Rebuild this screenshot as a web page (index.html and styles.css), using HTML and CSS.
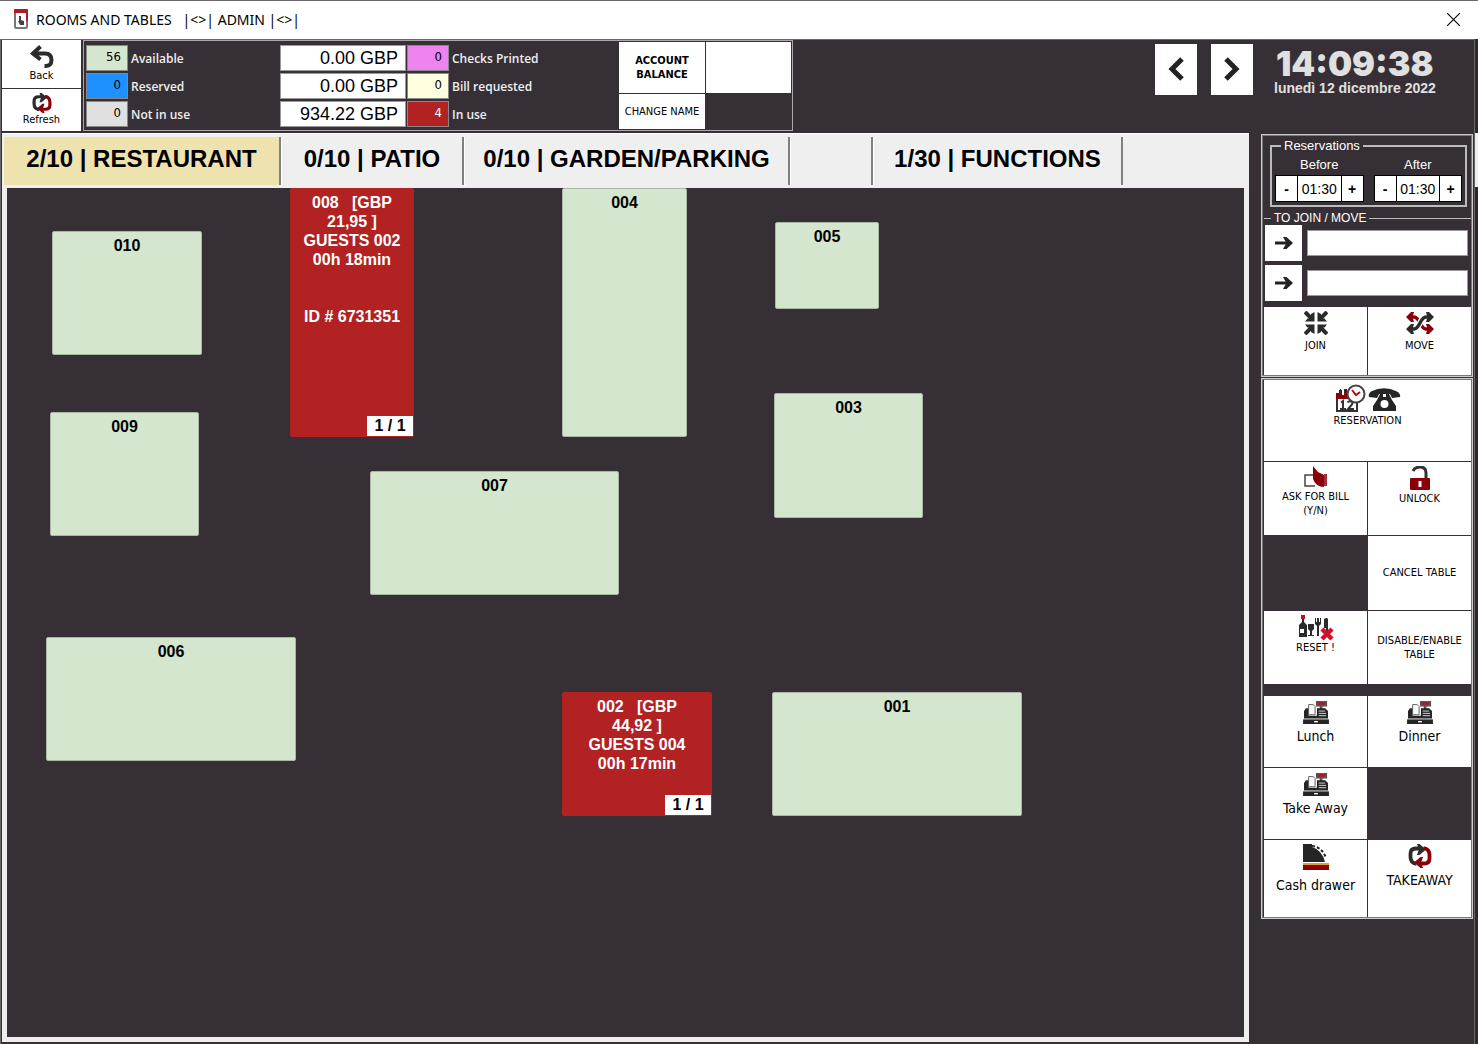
FILE: index.html
```
<!DOCTYPE html>
<html lang="en">
<head>
  <meta charset="utf-8">
  <title>ROOMS AND TABLES</title>
  <meta name="viewport" content="width=device-width, initial-scale=1">
  <link rel="stylesheet" href="styles.css">
</head>
<body>

  <!-- shared icons -->
  <svg class="defs" width="0" height="0">
    <symbol id="i-refresh" viewBox="0 0 24 24">
      <path d="M8.500 20Q2.500 19 2.500 13V9.500Q2.500 4.500 8 4.500H12" fill="none" stroke="#2b2b2b" stroke-width="3.800"/>
      <path d="M9 0h2.500l6.500 5.500-6.500 5.500H9l2-5.500z" fill="#2b2b2b"/>
      <path d="M15.500 4Q21.500 5 21.500 11v3.500Q21.500 19.500 16 19.500h-4" fill="none" stroke="#8b0008" stroke-width="3.800"/>
      <path d="M15 24h-2.500L6 18.500l6.500-5.500H15l-2 5.500z" fill="#8b0008"/>
    </symbol>
    <symbol id="i-arrow" viewBox="0 0 18 14">
      <path d="M0 7h14" fill="none" stroke="#222" stroke-width="3"/>
      <path d="M8 1h3.500L18 7l-6.500 6H8l3.500-6z" fill="#222"/>
    </symbol>
    <symbol id="i-register" viewBox="0 0 28 26">
      <path d="M14 1h12v6h-5v3h-3V7h-4z" fill="#555"/>
      <path d="M16 2.500h8v2.500h-8z" fill="#b5122a"/>
      <path d="M3 9h3v8h9V9h9l3 3v8H1v-8z" fill="#252525"/>
      <path d="M6 5h5l2 2v9H6z" fill="#fff" stroke="#555"/>
      <path d="M17 12h7M17 14.500h8M17 17h8" stroke="#ddd"/>
      <path d="M0 21h28v5H0z" fill="#252525"/>
      <path d="M12 23.500h4" stroke="#fff" stroke-width="1.500"/>
    </symbol>
  </svg>

  <header class="titlebar">
    <svg class="app-icon" viewBox="0 0 14 20">
      <rect x="1" y="1" width="12" height="18" rx="1" fill="#fff" stroke="#777" stroke-width="2"/>
      <path d="M0 4V1q0-1 1-1h12q1 0 1 1v11h-2V4z" fill="#b01a22"/>
      <path d="M5 7h2v4l3 1v4H6l-2-4h1z" fill="#444"/>
    </svg>
    <h1>ROOMS AND TABLES &nbsp; |&lt;&gt;| ADMIN |&lt;&gt;|</h1>
    <button class="close" aria-label="Close">
      <svg viewBox="0 0 12 12"><path d="M0 0l12 12M12 0L0 12" stroke="#000" fill="none"/></svg>
    </button>
  </header>

  <div class="window">
    <div class="toolbar">
      <div class="side-actions">
        <button>
          <svg class="icon-24" viewBox="0 0 24 24"><path d="M10.500 1.500L3 8.500l7.500 6M3 8.500h12q6.500 0 6.500 6.500t-7 6" fill="none" stroke="#2b2b2b" stroke-width="4"/></svg>
          Back
        </button>
        <button>
          <svg class="icon-20"><use href="#i-refresh"/></svg>
          Refresh
        </button>
      </div>

      <div class="status">
        <div class="counters">
          <span class="count available">56</span><span class="label">Available</span>
          <input class="money" value="0.00 GBP" aria-label="Checks printed total" readonly>
          <span class="count printed">0</span><span class="label">Checks Printed</span>

          <span class="count reserved">0</span><span class="label">Reserved</span>
          <input class="money" value="0.00 GBP" aria-label="Bill requested total" readonly>
          <span class="count requested">0</span><span class="label">Bill requested</span>

          <span class="count unused">0</span><span class="label">Not in use</span>
          <input class="money" value="934.22 GBP" aria-label="In use total" readonly>
          <span class="count inuse">4</span><span class="label">In use</span>
        </div>
        <div class="account">
          <button class="bold">ACCOUNT<br>BALANCE</button>
          <button aria-label="Balance"></button>
          <button>CHANGE NAME</button>
        </div>
      </div>

      <div class="pager">
        <button aria-label="Previous"><svg viewBox="0 0 16 24"><path d="M14 2L4 12l10 10" fill="none" stroke="#222" stroke-width="5"/></svg></button>
        <button aria-label="Next"><svg viewBox="0 0 16 24"><path d="M2 2l10 10L2 22" fill="none" stroke="#222" stroke-width="5"/></svg></button>
      </div>

      <div class="clock">
        <div class="time">14:09:38</div>
        <div class="date">lunedì 12 dicembre 2022</div>
      </div>
    </div>

    <div class="content">
      <main class="rooms">
        <nav class="tabs">
          <button class="tab tab-restaurant active">2/10 | RESTAURANT</button>
          <button class="tab tab-patio">0/10 | PATIO</button>
          <button class="tab tab-garden">0/10 | GARDEN/PARKING</button>
          <button class="tab tab-empty" aria-label="Empty room"></button>
          <button class="tab tab-functions">1/30 | FUNCTIONS</button>
        </nav>

        <div class="floor">
          <button class="table t010">010</button>
          <button class="table t009">009</button>
          <button class="table t006">006</button>
          <button class="table t008 busy">
            <span>008 &nbsp; [GBP<br>21,95 ]<br>GUESTS 002<br>00h 18min<br><br><br>ID # 6731351</span>
            <span class="badge">1 / 1</span>
          </button>
          <button class="table t007">007</button>
          <button class="table t004">004</button>
          <button class="table t002 busy">
            <span>002 &nbsp; [GBP<br>44,92 ]<br>GUESTS 004<br>00h 17min</span>
            <span class="badge">1 / 1</span>
          </button>
          <button class="table t005">005</button>
          <button class="table t003">003</button>
          <button class="table t001">001</button>
        </div>
      </main>

      <aside class="sidebar">
        <section class="box">
          <fieldset class="reservations">
            <legend>Reservations</legend>
            <div class="spin">
              <label for="before">Before</label>
              <div class="spin-row"><button>-</button><input id="before" value="01:30"><button>+</button></div>
            </div>
            <div class="spin">
              <label for="after">After</label>
              <div class="spin-row"><button>-</button><input id="after" value="01:30"><button>+</button></div>
            </div>
          </fieldset>

          <fieldset class="join">
            <legend>TO JOIN / MOVE</legend>
            <div class="join-row">
              <button aria-label="Set first table"><svg><use href="#i-arrow"/></svg></button>
              <input aria-label="First table">
            </div>
            <div class="join-row">
              <button aria-label="Set second table"><svg><use href="#i-arrow"/></svg></button>
              <input aria-label="Second table">
            </div>
          </fieldset>

          <div class="grid join-actions">
            <button>
              <svg class="icon-24" viewBox="0 0 24 24">
                <path d="M1 1l7 7M23 1l-7 7M1 23l7-7M23 23l-7-7" stroke="#2b2b2b" stroke-width="4"/>
                <path d="M10.500 1v9.500H1l2.500-3H7V3zM13.500 1v9.500H23l-2.500-3H17V3zM10.500 23v-9.500H1l2.500 3H7V21zM13.500 23v-9.500H23l-2.500 3H17V21z" fill="#2b2b2b"/>
              </svg>
              JOIN
            </button>
            <button>
              <svg class="icon-28" viewBox="0 0 28 24">
                <path d="M4 6h4q3 0 6 6t6 6h4" fill="none" stroke="#8b0008" stroke-width="3.400"/>
                <path d="M5 1h3L6.500 6 8 11H5L0 6zM23 13h-3l1.500 5-1.500 5h3l5-5z" fill="#8b0008"/>
                <path d="M10 17q2-1 4-5t4-5" fill="none" stroke="#fff" stroke-width="6"/>
                <path d="M4 18h4q3 0 6-6t6-6h4" fill="none" stroke="#2b2b2b" stroke-width="3.400"/>
                <path d="M5 13h3l-1.500 5L8 23H5l-5-5zM23 1h-3l1.500 5-1.500 5h3l5-5z" fill="#2b2b2b"/>
              </svg>
              MOVE
            </button>
          </div>
        </section>

        <section class="box">
          <div class="grid actions">
            <button class="wide">
              <svg class="icon-res" viewBox="0 0 66 30">
                <path d="M2 15v12h20V15" fill="#fff" stroke="#333" stroke-width="2"/>
                <path d="M1 9h3V6h3v5h2V5h3v8h4l2 2H1z" fill="#8b0008"/>
                <path d="M5 5h1v5H5zM9 5h1v5H9z" fill="#333"/>
                <path d="M6 18.500l2-1.500v8M5 25h6M12.500 18.500q1.500-2 4-1 2 1 0 3.500L13 25h6" fill="none" stroke="#333" stroke-width="2"/>
                <circle cx="21" cy="10" r="8.500" fill="#fff" stroke="#444" stroke-width="2"/>
                <path d="M17 6l4 5 4-3" fill="none" stroke="#b01010" stroke-width="2"/>
                <path d="M34 13q-1-3 2-5.500Q49 1 62 7.500q4 2.500 3 5.500l-8 1-2-4H44l-2 4z" fill="#252525"/>
                <path d="M45 10h3v3h3v-3h3l3 6 4 6v5H38v-5l4-6z" fill="#252525"/>
                <circle cx="49.500" cy="20" r="4" fill="#fff"/>
              </svg>
              RESERVATION
            </button>
            <button>
              <svg class="icon-24" viewBox="0 0 24 24">
                <path d="M10 9H1v11h10" fill="none" stroke="#444" stroke-width="1.500"/>
                <path d="M9 0l5 6 6 3v12q-8 0-11-8z" fill="#8b0008"/>
                <path d="M20 8h3v12h-3z" fill="#a03038"/>
              </svg>
              ASK FOR BILL<br>(Y/N)
            </button>
            <button class="unlock">
              <svg class="icon-24" viewBox="0 0 24 24">
                <path d="M5 5q2-4 7-4 6 0 6 6v5" fill="none" stroke="#333" stroke-width="3"/>
                <rect x="2" y="12" width="20" height="12" rx="1" fill="#8b0008"/>
                <path d="M12 15v6" stroke="#fff" stroke-width="3"/>
              </svg>
              UNLOCK
            </button>
            <span></span>
            <button class="middle">CANCEL TABLE</button>
            <button>
              <svg class="icon-reset" viewBox="0 0 36 26">
                <path d="M3 0h4v4H3z" fill="#b5122a"/>
                <path d="M4 4h2v3l3 3v12H1V10l3-3z" fill="#2b2b2b"/>
                <path d="M2 14h4v4H2z" fill="#fff"/>
                <path d="M10 9h6v5l-2 2v4h2v1h-6v-1h2v-4l-2-2zM17 3h1v4h1V3h2v4h1V3h1v6l-2 2v10h-2V11l-2-2zM26 4q3-2 4 0v17h-2v-8h-2z" fill="#2b2b2b"/>
                <path d="M24 14l10 10M34 14L24 24" stroke="#d0102c" stroke-width="4.500"/>
              </svg>
              RESET !
            </button>
            <button class="middle">DISABLE/ENABLE<br>TABLE</button>
          </div>

          <div class="grid services">
            <button><svg class="icon-28"><use href="#i-register"/></svg>Lunch</button>
            <button><svg class="icon-28"><use href="#i-register"/></svg>Dinner</button>
            <button><svg class="icon-28"><use href="#i-register"/></svg>Take Away</button>
            <span></span>
            <button>
              <svg class="icon-drawer" viewBox="0 0 26 26">
                <path d="M0 0h9v3q10 3 13 15H0z" fill="#252525"/>
                <path d="M9 2q10 1 14 12" fill="none" stroke="#252525" stroke-width="2" stroke-dasharray="3 2"/>
                <path d="M0 19h26v2H0z" fill="#e0a020"/>
                <path d="M0 21h26v5H0z" fill="#8b0008"/>
              </svg>
              Cash drawer
            </button>
            <button><svg class="icon-24"><use href="#i-refresh"/></svg>TAKEAWAY</button>
          </div>
        </section>
      </aside>
    </div>
  </div>

</body>
</html>
```
FILE: styles.css
```
* {
  box-sizing: border-box;
}

body {
  margin: 0;
  min-height: 100vh;
  display: flex;
  flex-direction: column;
  /* strip of the window behind, seen on the right edge */
  background: linear-gradient(#2c282c 133px, #efefef 133px, #efefef 187px, #2c282c 187px);
  font-family: "DejaVu Sans Condensed", "DejaVu Sans", sans-serif;
  font-size: 11px;
  color: #000;
}

button {
  margin: 0;
  padding: 0;
  border: none;
  border-radius: 0;
  background-color: #fff;
  color: #000;
  font: inherit;
  line-height: 14px;
  cursor: pointer;
}

input {
  min-width: 0;
  border: 1px solid #999;
  border-radius: 0;
  padding: 0;
  background-color: #fff;
}

svg {
  display: block;
}

.defs {
  position: absolute;
}

/* title bar */
.titlebar {
  display: flex;
  align-items: center;
  height: 39px;
  padding: 0 18px 2px 14px;
  background-color: #fff;
  border-top: 1px solid #6a666a;
}

.app-icon {
  width: 14px;
  height: 20px;
  margin-right: 8px;
}

.titlebar h1 {
  flex: 1;
  margin: 0;
  font: 14px "Noto Sans", sans-serif;
}

.close svg {
  width: 13px;
  height: 13px;
}

.window {
  flex: 1;
  display: flex;
  flex-direction: column;
  margin-right: 3px;
  border: 1px solid #6a666a;
  border-bottom: none;
  background-color: #363036;
}

/* toolbar */
.toolbar {
  display: flex;
  align-items: flex-start;
  height: 93px;
  padding-left: 1px;
}

.side-actions {
  display: flex;
  flex-direction: column;
  gap: 1px;
  width: 79px;
  margin-right: 2px;
}

.side-actions button {
  display: flex;
  flex-direction: column;
  align-items: center;
  justify-content: center;
  height: 48px;
}

.side-actions button + button {
  height: 42px;
}

.icon-20 {
  width: 20px;
  height: 20px;
}

.icon-24 {
  width: 24px;
  height: 24px;
}

.icon-28 {
  width: 28px;
  height: 24px;
}

.status {
  display: flex;
  gap: 1px;
  height: 91px;
  padding: 1px 1px 1px 2px;
  border: 1px solid #aaa6aa;
}

.counters {
  display: grid;
  grid-template-columns: 42px 150px 126px 42px 168px;
  grid-auto-rows: 26px;
  gap: 2px 1px;
  padding-top: 3px;
}

.count {
  padding-right: 6px;
  border: 1px solid #888;
  text-align: right;
  font-size: 13px;
  line-height: 21px;
}

.available { background-color: #d4e6ce; }
.reserved { background-color: #1e90ff; }
.unused { background-color: #e0e0e0; }
.printed { background-color: #ee82ee; }
.requested { background-color: #ffffe0; }
.inuse { background-color: #b22222; color: #fff; }

.label {
  padding-left: 2px;
  color: #eee;
  font: 600 12px/28px "Open Sans", sans-serif;
}

.money {
  padding-right: 7px;
  text-align: right;
  font: 18px "Liberation Sans", Arial, sans-serif;
}

.account {
  display: grid;
  grid-template-columns: 86px 85px;
  grid-template-rows: 51px 35px;
  gap: 1px;
}

.bold {
  font-weight: bold;
}

.pager {
  display: flex;
  gap: 14px;
  margin: 4px 21px 0 auto;
}

.pager button {
  display: flex;
  align-items: center;
  justify-content: center;
  width: 42px;
  height: 51px;
  padding-bottom: 2px;
}

.pager svg {
  width: 16px;
  height: 24px;
}

.clock {
  width: 200px;
  padding-top: 7px;
  color: #e0e0e0;
  font-family: "Liberation Sans", Arial, sans-serif;
}

.time {
  padding-left: 2px;
  font: 900 34px/34px Inter, sans-serif;
}

.date {
  font-size: 14px;
  font-weight: bold;
  line-height: 14px;
}

/* rooms */
.content {
  flex: 1;
  display: grid;
  grid-template-columns: 1fr 212px;
  gap: 12px;
  padding: 0 1px 2px 1px;
}

.rooms {
  display: flex;
  flex-direction: column;
}

.tabs {
  display: flex;
  height: 54px;
  padding: 3px 0 2px 2px;
  background-color: #efefef;
  border-top: 1px solid #fff;
}

.tab {
  padding-bottom: 4px;
  border-right: 2px solid #808080;
  border-left: 1px solid #fff;
  background-color: #efefef;
  font: bold 24px "Liberation Sans", Arial, sans-serif;
}

.tab.active {
  background-color: #eee2ae;
  border-left: none;
}

.tab-restaurant { width: 277px; }
.tab-patio { width: 183px; }
.tab-garden { width: 326px; }
.tab-empty { width: 83px; }
.tab-functions { width: 250px; }

.floor {
  flex: 1;
  position: relative;
  min-height: 640px;
  border: 5px solid #eee;
  border-top-width: 1px;
}

.table {
  position: absolute;
  display: flex;
  align-items: flex-start;
  justify-content: center;
  padding-top: 4px;
  border: 1px solid #a9b8a5;
  border-radius: 2px;
  background-color: #d4e6ce;
  font: bold 16px/19px "Liberation Sans", Arial, sans-serif;
}

.busy {
  border-color: #b22222;
  background-color: #b22222;
  color: #fff;
}

.badge {
  position: absolute;
  right: 0;
  bottom: 0;
  width: 46px;
  height: 20px;
  background-color: #fff;
  color: #000;
}

.t010 { left: 45px; top: 43px; width: 150px; height: 124px; }
.t009 { left: 43px; top: 224px; width: 149px; height: 124px; }
.t006 { left: 39px; top: 449px; width: 250px; height: 124px; }
.t008 { left: 283px; top: 0; width: 124px; height: 249px; }
.t007 { left: 363px; top: 283px; width: 249px; height: 124px; }
.t004 { left: 555px; top: 0; width: 125px; height: 249px; }
.t002 { left: 555px; top: 504px; width: 150px; height: 124px; }
.t005 { left: 768px; top: 34px; width: 104px; height: 87px; }
.t003 { left: 767px; top: 205px; width: 149px; height: 125px; }
.t001 { left: 765px; top: 504px; width: 250px; height: 124px; }

/* sidebar */
.sidebar {
  padding-top: 1px;
}

.box {
  padding: 1px 1px 1px 2px;
  border: 1px solid #ccc;
  outline: 1px solid #777;
  outline-offset: -2px;
}

.box + .box {
  margin-top: 1px;
}

fieldset {
  min-width: 0;
  margin: 0;
  padding: 0;
  border: 2px solid #bbb;
  color: #fff;
}

legend {
  margin-left: 6px;
  padding: 0 3px;
  font-family: "Liberation Sans", Arial, sans-serif;
}

.reservations {
  display: flex;
  gap: 10px;
  height: 71px;
  margin: 0 4px 0 6px;
  padding: 0 3px;
}

.reservations legend {
  font-size: 13px;
  line-height: 20px;
}

.spin {
  flex: 1;
  text-align: center;
  font: 14px/18px "Liberation Sans", Arial, sans-serif;
}

.spin label {
  display: block;
  font-size: 13px;
}

.spin-row {
  display: flex;
  height: 27px;
  margin-top: 1px;
  border: 1px solid #000;
}

.spin-row button {
  width: 21px;
  font-weight: bold;
}

.spin-row input {
  flex: 1;
  width: 20px;
  border: 1px solid #000;
  border-width: 0 1px;
  text-align: center;
  font: inherit;
}

.join {
  margin-top: 4px;
  border-width: 1px 0 0;
  padding: 0 3px 2px 1px;
}

.join legend {
  font-size: 12px;
  line-height: 14px;
}

.join-row {
  display: flex;
  align-items: center;
  gap: 5px;
  margin-bottom: 4px;
}

.join-row button {
  width: 37px;
  height: 36px;
  padding-left: 10px;
}

.join-row svg {
  width: 18px;
  height: 14px;
}

.join-row input {
  flex: 1;
  height: 26px;
}

.grid {
  display: grid;
  grid-template-columns: 1fr 1fr;
  gap: 1px;
}

.grid button {
  display: flex;
  flex-direction: column;
  align-items: center;
  padding-top: 4px;
}

.grid .middle {
  justify-content: center;
  padding: 0;
}

.grid .wide {
  grid-column: span 2;
}

.grid .unlock {
  gap: 2px;
}

.join-actions {
  grid-auto-rows: 68px;
}

.join-actions button {
  gap: 4px;
}

.actions {
  grid-template-rows: 81px 73px 74px 73px;
  margin-bottom: 12px;
}

.services {
  grid-template-rows: 71px 71px 77px;
}

.services button {
  gap: 3px;
  font-size: 14px;
  line-height: 18px;
}

.icon-res {
  width: 66px;
  height: 30px;
}

.icon-reset {
  width: 36px;
  height: 26px;
}

.icon-drawer {
  width: 26px;
  height: 26px;
  margin-bottom: 3px;
}
```
